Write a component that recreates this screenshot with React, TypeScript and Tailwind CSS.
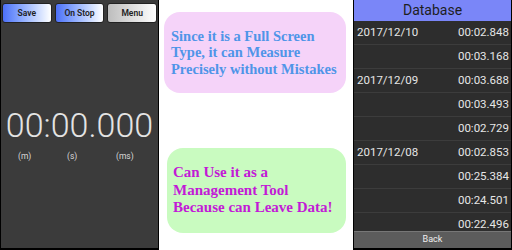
import React from 'react';

const rows: [string, string][] = [
  ['2017/12/10', '00:02.848'],
  ['', '00:03.168'],
  ['2017/12/09', '00:03.688'],
  ['', '00:03.493'],
  ['', '00:02.729'],
  ['2017/12/08', '00:02.853'],
  ['', '00:25.384'],
  ['', '00:24.501'],
  ['', '00:22.496'],
];

const serif = { fontFamily: '"Liberation Serif", "Times New Roman", serif' };
const sans = { fontFamily: 'Roboto, "Liberation Sans", sans-serif' };

const StopwatchPanel: React.FC = () => (
  <div className="flex h-full w-[159px] flex-col border-x border-b-2 border-black bg-[#3b3b3b]" style={sans}>
    <div className="flex gap-[3px] px-[1px] pt-[3px]">
      <button className="h-[20px] flex-1 rounded-[3px] border border-[#222] bg-gradient-to-r from-[#4d6ff7] to-white text-[8.5px] font-semibold text-[#222]">
        Save
      </button>
      <button className="h-[20px] flex-1 rounded-[3px] border border-[#222] bg-gradient-to-r from-[#4d6ff7] to-white text-[8.5px] font-semibold text-[#222]">
        On Stop
      </button>
      <button className="h-[20px] flex-1 rounded-[3px] border border-[#222] bg-gradient-to-r from-[#bdbdbd] to-white text-[8.5px] font-semibold text-[#222]">
        Menu
      </button>
    </div>
    <div className="mt-[85px] text-center text-[34px] font-light leading-none text-[#e4e4e4]">
      00:00.000
    </div>
    <div className="relative mt-[8px] h-[12px] text-[8.5px] text-[#d8d8d8]">
      <span className="absolute left-[17px]">(m)</span>
      <span className="absolute left-[66px]">(s)</span>
      <span className="absolute left-[115px]">(ms)</span>
    </div>
  </div>
);

const DatabasePanel: React.FC = () => (
  <div className="flex h-full w-[159px] flex-col border-x border-b-2 border-black bg-[#2d2d2d]" style={sans}>
    <div className="flex h-[21px] items-center justify-center bg-[#7a86f8] text-[14px] text-[#1e1e1e]">
      Database
    </div>
    <div className="flex-1 overflow-hidden">
      {rows.map(([date, time], i) => (
        <div
          key={i}
          className="flex h-[24px] items-center justify-between border-b border-[#3c3c3c] pl-[3px] pr-[2px] text-[11.5px] text-[#e6e6e6]"
        >
          <span>{date}</span>
          <span>{time}</span>
        </div>
      ))}
    </div>
    <div className="flex h-[17px] items-center justify-center border-t border-[#777] bg-[#5c5c5c] text-[9px] text-[#eee]">
      Back
    </div>
  </div>
);

export default function App() {
  return (
    <div className="flex h-[250px] w-[512px] overflow-hidden bg-white">
      <StopwatchPanel />
      <div className="flex w-[194px] flex-col pl-[5px] pr-[7px]" style={serif}>
        <div className="mt-[12px] flex h-[81px] flex-col justify-center rounded-[16px] bg-[#f5d3f9] pl-[7px] text-[14.5px] font-bold leading-[16.5px] text-[#4f95e8]">
          <div>Since it is a Full Screen</div>
          <div>Type, it can Measure</div>
          <div>Precisely without Mistakes</div>
        </div>
        <div className="ml-[3px] mt-[55px] flex h-[85px] flex-col justify-center rounded-[16px] bg-[#c9fbc0] pl-[6px] text-[15px] font-bold leading-[17.5px] text-[#c21ad6]">
          <div>Can Use it as a</div>
          <div>Management Tool</div>
          <div>Because can Leave Data!</div>
        </div>
      </div>
      <DatabasePanel />
    </div>
  );
}
